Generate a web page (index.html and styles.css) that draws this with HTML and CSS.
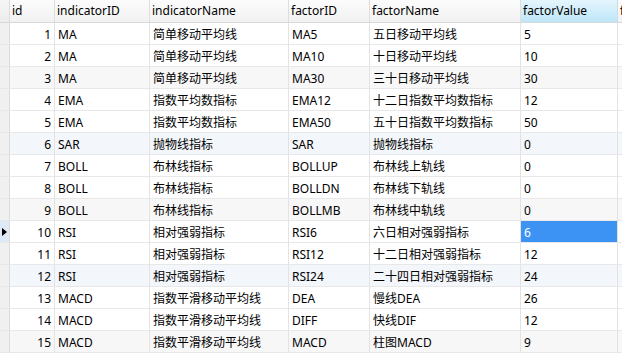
FILE: index.html
```html
<!DOCTYPE html>
<html lang="zh-CN">
<head>
<meta charset="utf-8">
<title>factor table</title>
<link rel="stylesheet" href="styles.css">
</head>
<body>
<div class="grid">
  <div class="row head">
    <div class="cell ind"></div>
    <div class="cell">id</div>
    <div class="cell">indicatorID</div>
    <div class="cell">indicatorName</div>
    <div class="cell">factorID</div>
    <div class="cell">factorName</div>
    <div class="cell sel-col">factorValue</div>
    <div class="cell last">f</div>
  </div>
  <div class="row"><div class="cell ind"></div><div class="cell num">1</div><div class="cell">MA</div><div class="cell">简单移动平均线</div><div class="cell">MA5</div><div class="cell">五日移动平均线</div><div class="cell">5</div><div class="cell last"></div></div>
  <div class="row"><div class="cell ind"></div><div class="cell num">2</div><div class="cell">MA</div><div class="cell">简单移动平均线</div><div class="cell">MA10</div><div class="cell">十日移动平均线</div><div class="cell">10</div><div class="cell last"></div></div>
  <div class="row shade"><div class="cell ind"></div><div class="cell num">3</div><div class="cell">MA</div><div class="cell">简单移动平均线</div><div class="cell">MA30</div><div class="cell">三十日移动平均线</div><div class="cell">30</div><div class="cell last"></div></div>
  <div class="row"><div class="cell ind"></div><div class="cell num">4</div><div class="cell">EMA</div><div class="cell">指数平均数指标</div><div class="cell">EMA12</div><div class="cell">十二日指数平均数指标</div><div class="cell">12</div><div class="cell last"></div></div>
  <div class="row"><div class="cell ind"></div><div class="cell num">5</div><div class="cell">EMA</div><div class="cell">指数平均数指标</div><div class="cell">EMA50</div><div class="cell">五十日指数平均数指标</div><div class="cell">50</div><div class="cell last"></div></div>
  <div class="row shade-blue"><div class="cell ind"></div><div class="cell num">6</div><div class="cell">SAR</div><div class="cell">抛物线指标</div><div class="cell">SAR</div><div class="cell">抛物线指标</div><div class="cell">0</div><div class="cell last"></div></div>
  <div class="row"><div class="cell ind"></div><div class="cell num">7</div><div class="cell">BOLL</div><div class="cell">布林线指标</div><div class="cell">BOLLUP</div><div class="cell">布林线上轨线</div><div class="cell">0</div><div class="cell last"></div></div>
  <div class="row"><div class="cell ind"></div><div class="cell num">8</div><div class="cell">BOLL</div><div class="cell">布林线指标</div><div class="cell">BOLLDN</div><div class="cell">布林线下轨线</div><div class="cell">0</div><div class="cell last"></div></div>
  <div class="row shade"><div class="cell ind"></div><div class="cell num">9</div><div class="cell">BOLL</div><div class="cell">布林线指标</div><div class="cell">BOLLMB</div><div class="cell">布林线中轨线</div><div class="cell">0</div><div class="cell last"></div></div>
  <div class="row current"><div class="cell ind"><span class="arrow"></span></div><div class="cell num">10</div><div class="cell">RSI</div><div class="cell">相对强弱指标</div><div class="cell">RSI6</div><div class="cell">六日相对强弱指标</div><div class="cell selected">6</div><div class="cell last"></div></div>
  <div class="row"><div class="cell ind"></div><div class="cell num">11</div><div class="cell">RSI</div><div class="cell">相对强弱指标</div><div class="cell">RSI12</div><div class="cell">十二日相对强弱指标</div><div class="cell">12</div><div class="cell last"></div></div>
  <div class="row shade-blue"><div class="cell ind"></div><div class="cell num">12</div><div class="cell">RSI</div><div class="cell">相对强弱指标</div><div class="cell">RSI24</div><div class="cell">二十四日相对强弱指标</div><div class="cell">24</div><div class="cell last"></div></div>
  <div class="row"><div class="cell ind"></div><div class="cell num">13</div><div class="cell">MACD</div><div class="cell">指数平滑移动平均线</div><div class="cell">DEA</div><div class="cell">慢线DEA</div><div class="cell">26</div><div class="cell last"></div></div>
  <div class="row"><div class="cell ind"></div><div class="cell num">14</div><div class="cell">MACD</div><div class="cell">指数平滑移动平均线</div><div class="cell">DIFF</div><div class="cell">快线DIF</div><div class="cell">12</div><div class="cell last"></div></div>
  <div class="row shade"><div class="cell ind"></div><div class="cell num">15</div><div class="cell">MACD</div><div class="cell">指数平滑移动平均线</div><div class="cell">MACD</div><div class="cell">柱图MACD</div><div class="cell">9</div><div class="cell last"></div></div>
</div>
</body>
</html>
```

FILE: styles.css
```css
html, body {
  margin: 0;
  padding: 0;
  background: #ffffff;
}
body {
  width: 622px;
  height: 357px;
  overflow: hidden;
  font-family: "Noto Sans", "Noto Sans CJK SC", sans-serif;
  font-size: 12px;
  color: #000000;
}
.grid {
  display: flex;
  flex-direction: column;
}
.row {
  display: grid;
  grid-template-columns: 10px 45px 95px 139px 81px 151px 97px 1fr;
  height: 22px;
  background: #ffffff;
}
.row.head {
  height: 23px;
  background: linear-gradient(#fcfcfc, #f1f1f1);
}
.row.shade {
  background: #f7f7f7;
}
.row.shade-blue {
  background: #f3f6fa;
}
.cell {
  box-sizing: border-box;
  border-right: 1px solid #e3e3e3;
  border-bottom: 1px solid #e8e8e8;
  padding: 3px 0 0 3px;
  line-height: 18px;
  white-space: nowrap;
  overflow: hidden;
}
.head .cell {
  padding-top: 2px;
  padding-left: 2px;
  border-right-color: #dedede;
  border-bottom-color: #d8d8d8;
}
.cell.num {
  text-align: right;
  padding-left: 0;
  padding-right: 3px;
}
.cell.last {
  border-right: none;
}
.cell.ind {
  background: #f0f0f0;
  border-right-color: #dcdcdc;
  padding: 0;
  display: flex;
  align-items: center;
}
.head .cell.ind {
  background: linear-gradient(#f6f6f6, #ececec);
}
.head .cell.sel-col {
  background: linear-gradient(#e4f5fd, #bee6f8);
  border-right-color: #c6dfec;
}
.current .cell.ind {
  background: #dde9f5;
}
.arrow {
  display: block;
  width: 0;
  height: 0;
  margin-left: 2px;
  border-top: 4px solid transparent;
  border-bottom: 4px solid transparent;
  border-left: 5px solid #000000;
}
.cell.selected {
  background: #3c93f3;
  color: #ffffff;
}
```
